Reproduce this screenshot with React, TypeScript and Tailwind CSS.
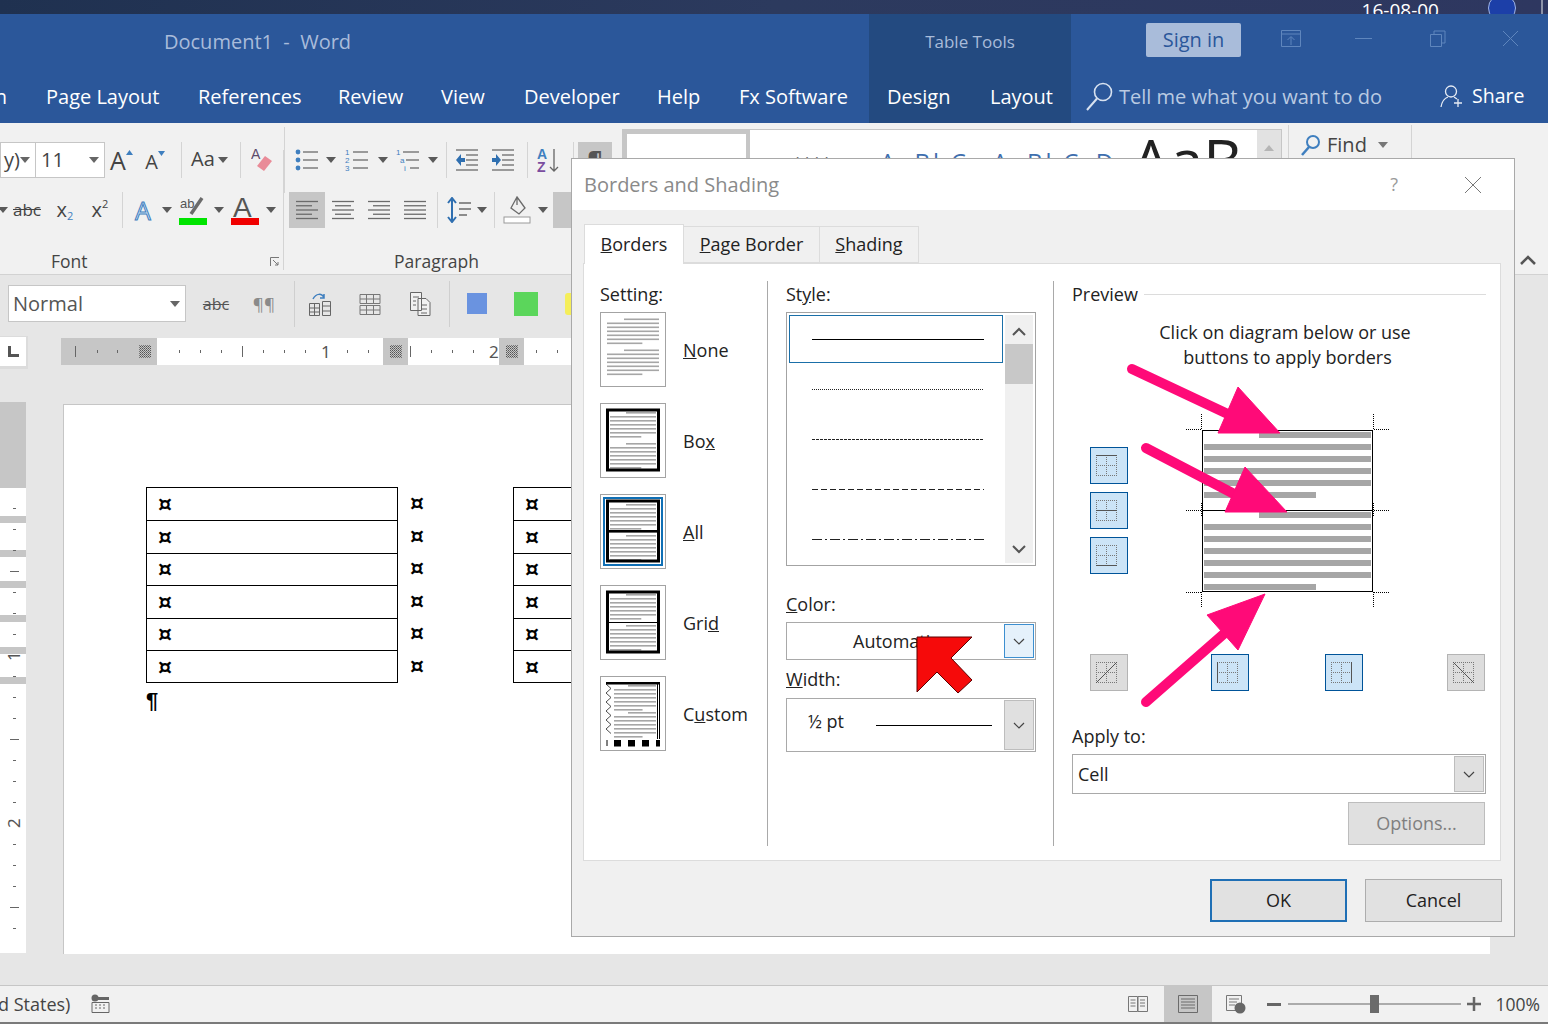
import React from "react";

const ui = "font-['Open_Sans','Noto_Sans',sans-serif]";

const Caret = ({ c = "#5a5a5a" }: { c?: string }) => (
  <svg width="10" height="6" viewBox="0 0 10 6" className="shrink-0"><path d="M0 0h10L5 6z" fill={c} /></svg>
);

const Sep = ({ w, h = 36 }: { w: number; h?: number }) => (
  <div className="flex justify-center items-center shrink-0 h-[36px]" style={{ width: w }}>
    <div className="w-px bg-[#d4d4d4] shrink-0" style={{ height: h }} />
  </div>
);

const Slot = ({ w, children, active }: { w: number; children?: React.ReactNode; active?: boolean }) => (
  <div className={`flex items-center justify-center shrink-0 h-[36px] ${active ? "bg-[#c6c6c6]" : ""}`} style={{ width: w }}>
    {children}
  </div>
);

const Lines = ({ rows, w = 24 }: { rows: [number, number][]; w?: number }) => (
  <svg width={w} height="22" viewBox={`0 0 ${w} 22`}>
    {rows.map(([a, b], i) => (
      <line key={i} x1={a} x2={b} y1={2.5 + i * (17 / (rows.length - 1))} y2={2.5 + i * (17 / (rows.length - 1))} stroke="#6b6b6b" strokeWidth="1.3" />
    ))}
  </svg>
);

const ListIcon = ({ kind }: { kind: "b" | "n" | "m" }) => (
  <svg width="24" height="24" viewBox="0 0 24 24">
    <g stroke="#6b6b6b" strokeWidth="1.3">
      <line x1={kind === "m" ? 7 : 8} x2="23" y1="4" y2="4" />
      <line x1={kind === "m" ? 10 : 8} x2="23" y1="12" y2="12" />
      <line x1={kind === "m" ? 14 : 8} x2={kind === "m" ? 23 : 23} y1="20" y2="20" />
    </g>
    {kind === "b" && [4, 12, 20].map((y) => <circle key={y} cx="3" cy={y} r="2.4" fill="#3f7fbf" />)}
    {kind !== "b" && (
      <g fontSize="8" fill="#3f7fbf" fontFamily="Liberation Sans">
        <text x="0" y="7">1</text>
        <text x={kind === "m" ? 4 : 0} y="15">{kind === "m" ? "a" : "2"}</text>
        <text x={kind === "m" ? 8 : 0} y="23">{kind === "m" ? "i" : "3"}</text>
      </g>
    )}
  </svg>
);

const IndentIcon = ({ flip }: { flip?: boolean }) => (
  <svg width="24" height="24" viewBox="0 0 24 24">
    <g stroke="#6b6b6b" strokeWidth="1.3">
      <line x1="1" x2="23" y1="2" y2="2" /><line x1="11" x2="23" y1="7" y2="7" /><line x1="11" x2="23" y1="12" y2="12" />
      <line x1="11" x2="23" y1="17" y2="17" /><line x1="1" x2="23" y1="22" y2="22" />
    </g>
    {flip ? <path d="M1 10h4V6l5 6-5 6v-4H1z" fill="#2f6fb0" /> : <path d="M10 10H6V6l-5 6 5 6v-4h4z" fill="#2f6fb0" />}
  </svg>
);

const SmallCell = ({ kind, blue = true }: { kind: "top" | "mid" | "bottom" | "left" | "right" | "up" | "down"; blue?: boolean }) => {
  const solid: Record<string, [number, number, number, number]> = {
    top: [5, 7.5, 26, 7.5], mid: [5, 17.5, 26, 17.5], bottom: [5, 27.5, 26, 27.5], left: [5.5, 7, 5.5, 28],
    right: [25.5, 7, 25.5, 28], up: [5, 28, 26, 7], down: [5, 7, 26, 28],
  };
  const [x1, y1, x2, y2] = solid[kind];
  return (
    <div className={`w-[38px] h-[37px] shrink-0 border ${blue ? "bg-[#cce4f7] border-[#005499]" : "bg-[#dddddd] border-[#b4b4b4]"}`}>
      <svg width="36" height="35" viewBox="0 0 36 35" className="block">
        <g stroke="#777" strokeDasharray="1 1" fill="none">
          {kind !== "top" && <line x1="5" x2="26" y1="7.5" y2="7.5" />}
          {kind !== "bottom" && <line x1="5" x2="26" y1="27.5" y2="27.5" />}
          {kind !== "left" && <line x1="5.5" x2="5.5" y1="7" y2="28" />}
          {kind !== "right" && <line x1="25.5" x2="25.5" y1="7" y2="28" />}
          <line x1="15.5" x2="15.5" y1="7" y2="28" />
          {kind !== "mid" && <line x1="5" x2="26" y1="17.5" y2="17.5" />}
        </g>
        <line x1={x1} x2={x2} y1={y1} y2={y2} stroke="#555" />
      </svg>
    </div>
  );
};

const TextRows = ({ top, left, right, start }: { top: number; left: number; right: number; start: number }) => (
  <g fill="#a6a6a6">
    {[0, 1, 2, 3, 4, 5, 6].map((i) => (
      <rect key={i} x={i === 0 ? start : left} y={top + i * 4} width={i === 0 ? right - start : i === 6 ? (right - left) * 0.68 : right - left} height="1.6" />
    ))}
  </g>
);

const Tile = ({ kind }: { kind: "none" | "box" | "all" | "grid" | "custom" }) => (
  <div className="w-[66px] h-[75px] border border-[#a3a3a3] bg-white shrink-0">
    <svg width="64" height="73" viewBox="1 1 64 73" className="block">
      {kind === "none" && (<><TextRows top={6.5} left={7} right={59} start={24} /><TextRows top={37.5} left={7} right={59} start={24} /></>)}
      {kind === "custom" && (
        <>
          <TextRows top={9} left={14} right={56} start={28} />
          <TextRows top={36} left={14} right={56} start={28} />
          <path d="M6 8l5 4.5-5 4.5 5 4.5-5 4.5 5 4.5-5 4.5 5 4.5-5 4.5 5 4.5-5 4.5 5 4.5" fill="none" stroke="#222" strokeWidth="0.8" />
          <rect x="6" y="6" width="54" height="2.5" fill="#000" />
          <path d="M57.5 7v56M59.5 7v56" stroke="#000" strokeWidth="1" />
          <path d="M7 64v6" stroke="#000" />
          <rect x="14" y="64" width="7" height="6.5" fill="#000" /><rect x="28" y="64" width="7" height="6.5" fill="#000" />
          <rect x="42" y="64" width="7" height="6.5" fill="#000" /><rect x="56" y="64" width="4" height="6.5" fill="#000" />
        </>
      )}
      {(kind === "box" || kind === "all" || kind === "grid") && (
        <>
          <TextRows top={kind === "all" ? 10 : 9} left={10} right={56} start={26} />
          <TextRows top={kind === "all" ? 41 : 40} left={10} right={56} start={26} />
          <rect x="7.5" y="7" width="51" height="60" fill="none" stroke="#000" strokeWidth="3" />
          {kind === "all" && <rect x="4" y="4" width="58" height="67" fill="none" stroke="#0f6fb5" strokeWidth="2" />}
          {kind === "all" && <rect x="7.5" y="36" width="51" height="2.6" fill="#000" />}
          {kind === "grid" && <rect x="7.5" y="37" width="51" height="1" fill="#000" />}
        </>
      )}
    </svg>
  </div>
);

const DropBtn = ({ className }: { className: string }) => (
  <div className={`w-[30px] flex items-center justify-center shrink-0 border ${className}`}>
    <svg width="12" height="7" viewBox="0 0 12 7"><path d="M1 1l5 5 5-5" fill="none" stroke="#444" strokeWidth="1.2" /></svg>
  </div>
);

const Diagram = () => {
  const bars = [435, 447, 459, 471, 483, 495, 515, 527, 539, 551, 563, 575, 587];
  return (
    <svg width="205" height="194" viewBox="1185 414 205 194" className="block shrink-0">
      {bars.map((y, i) => {
        const start = i === 0 || i === 6 ? 1259 : 1204;
        const end = i === 5 || i === 12 ? 1316 : 1371;
        return <rect key={y} x={start} y={y - 3} width={end - start} height="6" fill="#a6a6a6" />;
      })}
      <rect x="1202.5" y="430.5" width="170" height="161" fill="none" stroke="#000" />
      <line x1="1202" x2="1373" y1="510.5" y2="510.5" stroke="#000" />
      <g stroke="#000" strokeDasharray="1 1" fill="none">
        <path d="M1201.5 414v16M1373.5 414v16M1186 429.5h16M1374 429.5h16" />
        <path d="M1186 510.5h16M1374 510.5h16M1201.5 503v14M1373.5 503v14" />
        <path d="M1186 592.5h16M1374 592.5h16M1201.5 592v16M1373.5 592v16" />
      </g>
    </svg>
  );
};

const TopTabs = [
  { t: "n", w: 46, r: true }, { t: "Page Layout", w: 152 }, { t: "References", w: 140 }, { t: "Review", w: 103 },
  { t: "View", w: 83 }, { t: "Developer", w: 133 }, { t: "Help", w: 82 }, { t: "Fx Software", w: 130 },
];

const rulerTicks = [97, 117, 179, 200, 221, 263, 284, 305, 347, 368, 431, 452, 473, 536, 557];

const Ruler = () => (
  <svg width="510" height="27" viewBox="61 338 510 27" className="block shrink-0">
    <defs>
      <pattern id="rulerGrip" width="2" height="2" patternUnits="userSpaceOnUse">
        <rect width="2" height="2" fill="#c6c6c6" />
        <rect width="1" height="1" fill="#555" />
        <rect x="1" y="1" width="1" height="1" fill="#777" />
      </pattern>
    </defs>
    <rect x="61" y="338" width="510" height="27" fill="#fff" />
    <rect x="61" y="338" width="96" height="27" fill="#c6c6c6" />
    <rect x="383" y="338" width="25" height="27" fill="#c6c6c6" />
    <rect x="499" y="338" width="25" height="27" fill="#c6c6c6" />
    {rulerTicks.map((x) => <rect key={x} x={x} y="350" width="1" height="3" fill="#666" />)}
    {[75, 242, 410].map((x) => <rect key={x} x={x} y="346" width="1" height="11" fill="#666" />)}
    {[139, 390, 506].map((x) => (
      <rect key={x} x={x} y="345" width="12" height="13" fill="url(#rulerGrip)" />
    ))}
    <text x="321" y="358" fontSize="17" fill="#555" fontFamily="Noto Sans">1</text>
    <text x="489" y="358" fontSize="17" fill="#555" fontFamily="Noto Sans">2</text>
  </svg>
);

const VRuler = () => {
  const ticks = Array.from({ length: 21 }, (_, i) => 508 + i * 21);
  return (
    <svg width="26" height="551" viewBox="0 402 26 551" className="block shrink-0">
      <rect x="0" y="402" width="26" height="551" fill="#fff" />
      <rect x="0" y="402" width="26" height="86" fill="#c6c6c6" />
      {[516, 550, 581, 615, 647, 677].map((y) => <rect key={y} x="0" y={y} width="26" height="7" fill="#c6c6c6" />)}
      {ticks.map((y) => {
        if (y === 655 || y === 823) return null;
        const long = y === 571 || y === 739 || y === 907;
        return <rect key={y} x={long ? 10 : 13} y={y} width={long ? 9 : 3} height="1" fill="#666" />;
      })}
      <text transform="translate(20 661) rotate(-90)" fontSize="17" fill="#555" fontFamily="Noto Sans">1</text>
      <text transform="translate(20 828) rotate(-90)" fontSize="17" fill="#555" fontFamily="Noto Sans">2</text>
    </svg>
  );
};

const Mark = () => <span className="font-['DejaVu_Sans',sans-serif] font-bold text-[22px] leading-none text-black">¤</span>;

export default function App() {
  const cells = [0, 1, 2, 3, 4, 5];
  return (
    <div className={`relative w-[1548px] h-[1024px] overflow-hidden bg-[#e6e6e6] ${ui}`}>
      {/* desktop strip */}
      <div className="h-[14px] bg-gradient-to-r from-[#1f3150] via-[#2c3a5e] to-[#2e3760] overflow-hidden flex justify-end items-end pr-[5px]">
        <span className="text-white text-[19px] leading-none mb-[-6px] mr-[49px]">16-08-00</span>
        <div className="w-[28px] h-[28px] rounded-full bg-[#1c3fa8] border border-[#9fb4e6] mb-[8px] mr-[25px] translate-y-[16px]" />
        <div className="w-[2px] h-[14px] bg-[#8d93a8]" />
      </div>

      {/* title row */}
      <div className="h-[55px] bg-[#2b579a] flex">
        <div className="w-[869px] pl-[164px] flex items-center text-[#a9bcda] text-[20px]">
          <span>Document1&nbsp; -&nbsp; Word</span>
        </div>
        <div className="w-[202px] bg-[#234a80] flex items-center justify-center text-[#a9bcda] text-[17px]">Table Tools</div>
        <div className="flex-1 flex items-start pl-[75px] pt-[9px]">
          <div className="w-[95px] h-[34px] rounded-[2px] bg-[#a9bcda] text-[#2b579a] text-[20px] flex items-center justify-center">Sign in</div>
          <svg width="24" height="20" viewBox="0 0 24 20" className="ml-[38px] mt-[6px]">
            <path d="M2.5 1.5h19v16h-19zM2.5 5h19M12 16V8M8.5 11L12 7.5l3.5 3.5" fill="none" stroke="#5f86bd" />
          </svg>
          <svg width="18" height="20" viewBox="0 0 18 20" className="ml-[52px] mt-[6px]"><path d="M0 9.5h17" stroke="#5f86bd" /></svg>
          <svg width="16" height="18" viewBox="0 0 16 18" className="ml-[57px] mt-[7px]">
            <path d="M0.5 4.5h11v12h-11zM4 4V1h11v12h-3" fill="none" stroke="#5f86bd" />
          </svg>
          <svg width="17" height="17" viewBox="0 0 17 17" className="ml-[56px] mt-[7px]"><path d="M1 1l15 15M16 1L1 16" stroke="#5f86bd" /></svg>
        </div>
      </div>

      {/* tab row */}
      <div className="h-[54px] bg-[#2b579a] flex text-white text-[20px]">
        {TopTabs.map((tab) => (
          <div key={tab.t} className={`h-full flex items-center shrink-0 pt-[1px] ${tab.r ? "justify-end pr-[39px]" : ""}`} style={{ width: tab.w }}>
            {tab.t}
          </div>
        ))}
        <div className="w-[202px] bg-[#234a80] flex items-center pl-[18px] pt-[1px] shrink-0">
          <span className="w-[103px]">Design</span>
          <span>Layout</span>
        </div>
        <div className="flex items-center pl-[15px]">
          <svg width="27" height="29" viewBox="0 0 27 29"><circle cx="17" cy="10" r="8.5" fill="none" stroke="#d8e2f0" strokeWidth="1.6" /><path d="M11 16.5L1 28" stroke="#d8e2f0" strokeWidth="2" /></svg>
          <span className="ml-[6px] pt-[1px] text-[#b9cae2] w-[321px]">Tell me what you want to do</span>
          <svg width="24" height="24" viewBox="0 0 24 24">
            <circle cx="11" cy="7.5" r="5.5" fill="none" stroke="#e6ecf5" strokeWidth="1.3" />
            <path d="M1 23c1-6 4-9 7-10M14 13l3 2M18 15v8M14 19h8" fill="none" stroke="#e6ecf5" strokeWidth="1.3" />
          </svg>
          <span className="ml-[8px] text-white text-[19.5px]">Share</span>
        </div>
      </div>

      {/* ribbon */}
      <div className="h-[152px] bg-[#f1f1f1] border-b border-[#d2d2d2] flex text-[#444]">
        <div className="w-[620px] shrink-0 pt-[19px]">
          <div className="flex items-center h-[36px]">
            <div className="w-[36px] h-[36px] bg-white border border-[#c6c6c6] flex items-center justify-between pl-[3px] pr-[5px] text-[20px] shrink-0">
              <span>y)</span><Caret c="#666" />
            </div>
            <div className="w-[69px] h-[36px] bg-white border border-[#c6c6c6] border-l-0 flex items-center justify-between pl-[5px] pr-[5px] text-[20px] shrink-0">
              <span>11</span><Caret c="#666" />
            </div>
            <Slot w={33}><span className="text-[25px] leading-none">A</span><svg width="7" height="5" className="mb-[16px]"><path d="M0 5h7L3.5 0z" fill="#3f7fbf" /></svg></Slot>
            <Slot w={34}><span className="text-[20px] leading-none mt-[4px]">A</span><svg width="7" height="5" className="mb-[14px]"><path d="M0 0h7L3.5 5z" fill="#3f7fbf" /></svg></Slot>
            <Sep w={18} />
            <div className="w-[50px] h-[36px] flex items-center pl-[1px] shrink-0"><span className="text-[20px] mr-[3px] -mt-[3px]">Aa</span><Caret /></div>
            <div className="w-px h-[36px] bg-[#d4d4d4] shrink-0" />
            <Slot w={38}>
              <svg width="22" height="26" viewBox="0 0 22 26" className="ml-[3px]">
                <text x="0" y="12" fontSize="14" fill="#5b4a6b" fontFamily="Liberation Sans">A</text>
                <path d="M14 9l7 5-8 10-7-5z" fill="#e98b98" />
              </svg>
            </Slot>
            <Sep w={11} h={66} />
            <Slot w={34}><ListIcon kind="b" /></Slot><Slot w={14}><Caret /></Slot>
            <Slot w={38}><ListIcon kind="n" /></Slot><Slot w={14}><Caret /></Slot>
            <Slot w={36}><ListIcon kind="m" /></Slot><Slot w={14}><Caret /></Slot>
            <Sep w={12} />
            <Slot w={30}><IndentIcon /></Slot>
            <Slot w={42}><IndentIcon flip /></Slot>
            <Sep w={6} />
            <Slot w={38}>
              <svg width="24" height="28" viewBox="0 0 24 28">
                <text x="0" y="13" fontSize="14" fontWeight="700" fill="#3f7fbf" fontFamily="Liberation Sans">A</text>
                <text x="0" y="26" fontSize="14" fontWeight="700" fill="#7a4d9f" fontFamily="Liberation Sans">Z</text>
                <path d="M17 3v22M13 21l4 4 4-4" fill="none" stroke="#666" strokeWidth="1.3" />
              </svg>
            </Slot>
            <Sep w={10} />
            <Slot w={34} active><span className="text-[24px] text-[#555] font-bold leading-none">¶</span></Slot>
          </div>
          <div className="flex items-center h-[36px] mt-[14px]">
            <Slot w={6}><Caret /></Slot>
            <Slot w={42}><span className="text-[17px] line-through">abc</span></Slot>
            <Slot w={34}><span className="text-[20px] font-medium">x</span><span className="text-[11px] text-[#3f7fbf] mt-[12px]">2</span></Slot>
            <Slot w={36}><span className="text-[20px] font-medium">x</span><span className="text-[11px] mb-[12px]">2</span></Slot>
            <Sep w={8} />
            <Slot w={34}>
              <span className="text-[25px] leading-none text-[#d6e6f7] [-webkit-text-stroke:1px_#3f7fbf]">A</span>
            </Slot>
            <Slot w={14}><Caret /></Slot>
            <Slot w={38}>
              <svg width="30" height="30" viewBox="0 0 30 30">
                <text x="2" y="13" fontSize="13" fill="#555" fontFamily="Liberation Sans">ab</text>
                <path d="M24 3L13 19" stroke="#6b6b6b" strokeWidth="3.5" />
                <rect x="1" y="23" width="28" height="7" fill="#00e400" />
              </svg>
            </Slot>
            <Slot w={14}><Caret /></Slot>
            <Slot w={38}>
              <svg width="30" height="30" viewBox="0 0 30 30">
                <text x="3" y="22" fontSize="28" fill="#555" fontFamily="Liberation Sans">A</text>
                <rect x="1" y="23" width="28" height="7" fill="#f00000" />
              </svg>
            </Slot>
            <Slot w={14}><Caret /></Slot>
            <Sep w={11} h={120} />
            <Slot w={36} active><Lines w={24} rows={[[1, 23], [1, 17], [1, 23], [1, 17], [1, 23]]} /></Slot>
            <Slot w={36}><Lines rows={[[1, 23], [4, 20], [1, 23], [4, 20], [1, 23]]} /></Slot>
            <Slot w={36}><Lines rows={[[1, 23], [6, 23], [1, 23], [6, 23], [1, 23]]} /></Slot>
            <Slot w={36}><Lines rows={[[1, 23], [1, 23], [1, 23], [1, 23], [1, 23]]} /></Slot>
            <Sep w={8} />
            <Slot w={36}>
              <svg width="24" height="26" viewBox="0 0 24 26">
                <path d="M5 1v24M1 6l4-5 4 5M1 20l4 5 4-5" fill="none" stroke="#2f6fb0" strokeWidth="2" />
                <path d="M12 6h12M12 12h12M12 18h8" stroke="#6b6b6b" strokeWidth="1.3" />
              </svg>
            </Slot>
            <Slot w={10}><Caret /></Slot>
            <Sep w={14} />
            <Slot w={32}>
              <svg width="28" height="28" viewBox="0 0 28 28">
                <path d="M14 1l8 11-6 6-8-6zM14 1v8" fill="none" stroke="#6b6b6b" strokeWidth="1.3" />
                <rect x="1" y="21" width="26" height="6" fill="#fff" stroke="#9a9a9a" />
              </svg>
            </Slot>
            <Slot w={20}><Caret /></Slot>
            <Slot w={38} active />
          </div>
          <div className="flex h-[22px] mt-[22px] text-[17.5px] leading-[22px] text-[#444]">
            <span className="ml-[51px] w-[219px]">Font</span>
            <svg width="10" height="10" viewBox="0 0 10 10" className="mt-[7px]"><path d="M0.5 9V0.5H9M3 3l5 5M8 5v3H5" fill="none" stroke="#777" /></svg>
            <span className="ml-[114px]">Paragraph</span>
          </div>
        </div>
        <div className="w-[2px] shrink-0" />
        <div className="h-[135px] w-[660px] mt-[6px] bg-white border border-[#c6c6c6] flex shrink-0 overflow-hidden">
          <div className="w-[127px] h-full border-[4px] border-[#c6c6c6] shrink-0" />
          <div className="w-[130px] pt-[17px] text-center text-[14px] text-[#444] leading-none tracking-[6px] shrink-0">....</div>
          <div className="w-[252px] pt-[20px] text-[#3f6fae] text-[24px] leading-none tracking-[3px] shrink-0 whitespace-nowrap overflow-hidden">AaBbCc AaBbCcD</div>
          <div className="w-[116px] text-[60px] leading-none text-[#222] shrink-0">AaB</div>
          <div className="w-[24px] bg-[#e2e2e2] flex justify-center pt-[15px] shrink-0 ml-auto">
            <svg width="10" height="6"><path d="M0 6h10L5 0z" fill="#b5b5b5" /></svg>
          </div>
        </div>
        <div className="flex-1 pl-[6px] pt-[2px]">
          <div className="flex items-center h-[40px] w-[124px] border-x border-[#d4d4d4] pl-[11px]">
            <svg width="20" height="22" viewBox="0 0 20 22"><circle cx="13" cy="8" r="6" fill="none" stroke="#3f7fbf" strokeWidth="2" /><path d="M9 13L2 21" stroke="#3f7fbf" strokeWidth="2.5" /></svg>
            <span className="ml-[7px] text-[20px] text-[#444]">Find</span>
            <span className="ml-[11px]"><Caret c="#777" /></span>
          </div>
        </div>
      </div>

      {/* mini toolbar */}
      <div className="h-[62px] flex items-center pb-[5px] text-[#555]">
        <div className="ml-[8px] w-[178px] h-[37px] bg-white border border-[#c6c6c6] flex items-center justify-between pl-[4px] pr-[5px] text-[20px] shrink-0">
          <span>Normal</span><Caret c="#666" />
        </div>
        <span className="w-[60px] text-center text-[16px] line-through shrink-0">abc</span>
        <span className="w-[36px] text-center text-[17px] text-[#8a8a8a] shrink-0">¶¶</span>
        <div className="w-[13px] flex justify-end shrink-0"><div className="w-px h-[46px] bg-[#cfcfcf]" /></div>
        <div className="w-[50px] flex justify-center shrink-0">
          <svg width="24" height="26" viewBox="0 0 24 26">
            <path d="M5 8c3-6 9-6 11-1M16 3v4h-4" fill="none" stroke="#3f7fbf" strokeWidth="1.5" />
            <path d="M1.5 12.5h10v12h-10zM1.5 17h10M1.5 21h10M6.5 13v11M14.5 10.5h8v14h-8zM14.5 15h8M14.5 20h8" fill="none" stroke="#666" />
          </svg>
        </div>
        <div className="w-[50px] flex justify-center shrink-0">
          <svg width="22" height="26" viewBox="0 0 22 26"><path d="M1 3.5h20v9H1zM1 8h20M1 14.5h20v9H1zM1 19h20M7.5 3v9M14.5 3v9M7.5 15v9M14.5 15v9" fill="none" stroke="#777" /></svg>
        </div>
        <div className="w-[50px] flex justify-center shrink-0">
          <svg width="22" height="26" viewBox="0 0 22 26"><path d="M1.5 1.5h11v18h-11zM9 7.5h8l4 4v13H9zM4 6h6M4 10h3M4 14h3M12 14h6M12 18h6M12 22h6" fill="#f1f1f1" stroke="#666" /></svg>
        </div>
        <div className="w-[5px] flex justify-end shrink-0 mr-[17px]"><div className="w-px h-[46px] bg-[#cfcfcf]" /></div>
        <div className="w-[20px] h-[21px] bg-[#6a93e0] shrink-0" />
        <div className="w-[24px] h-[24px] bg-[#5bd65b] shrink-0 ml-[27px]" />
        <div className="w-[20px] h-[22px] bg-[#f5ee5a] shrink-0 ml-[27px] rounded-[3px]" />
      </div>

      {/* ruler */}
      <div className="flex h-[28px] items-start">
        <div className="w-[28px] h-[33px] -mt-[1px] bg-[#dcdcdc] pr-[2px] pb-[3px] pt-[1px] shrink-0 z-10">
          <div className="h-full bg-white flex items-center justify-center">
            <svg width="11" height="11" viewBox="0 0 11 11"><path d="M1.5 0v9.5H11" fill="none" stroke="#555" strokeWidth="3" /></svg>
          </div>
        </div>
        <div className="w-[33px] shrink-0" />
        <div className="mt-[1px]"><Ruler /></div>
      </div>

      {/* document */}
      <div className="h-[620px] flex items-start">
        <div className="mt-[37px] shrink-0"><VRuler /></div>
        <div className="ml-[37px] mt-[39px] w-[1427px] h-[550px] bg-white border-l border-t border-[#c6c6c6] shrink-0 pl-[82px] pt-[82px]">
          <div className="flex items-start">
            <div className="w-[252px] border-[1.5px] border-black shrink-0">
              {cells.map((i) => (
                <div key={i} className={`h-[32.4px] pl-[11px] flex items-center ${i ? "border-t border-black" : ""}`}><Mark /></div>
              ))}
            </div>
            <div className="ml-[12px] w-[103px] shrink-0">
              {cells.map((i) => <div key={i} className="h-[32.5px] flex items-center"><Mark /></div>)}
            </div>
            <div className="w-[120px] border-[1.5px] border-black shrink-0">
              {cells.map((i) => (
                <div key={i} className={`h-[32.4px] pl-[11px] flex items-center ${i ? "border-t border-black" : ""}`}><Mark /></div>
              ))}
            </div>
          </div>
          <div className="font-['Liberation_Sans',sans-serif] font-bold text-[22px] leading-none text-black mt-[7px]">¶</div>
        </div>
      </div>

      {/* status bar */}
      <div className="h-[37px] bg-[#f1f1f1] border-t border-[#c6c6c6] flex items-center pr-[8px] text-[#444]">
        <span className="w-[92px] text-[18px] shrink-0 whitespace-nowrap -ml-[2px]">d States)</span>
        <svg width="20" height="20" viewBox="0 0 20 20" className="shrink-0">
          <circle cx="5" cy="4" r="3.5" fill="#666" /><path d="M8 3h11v3H8z" fill="#666" />
          <path d="M2 8.5h17v10H2zM5 11h2M9 11h2M13 11h2M5 14h2M9 14h2M13 14h2" fill="none" stroke="#666" />
        </svg>
        <div className="flex-1" />
        <svg width="20" height="18" viewBox="0 0 20 18" className="shrink-0">
          <path d="M0.5 1.5h9v15h-9zM10 1.5h9.5v15H10zM2.5 5h5M2.5 8h5M2.5 11h5M12 5h5M12 8h5M12 11h5" fill="none" stroke="#777" />
        </svg>
        <div className="w-[48px] h-full bg-[#c6c6c6] ml-[16px] flex items-center justify-center shrink-0">
          <svg width="20" height="18" viewBox="0 0 20 18"><path d="M0.5 0.5h19v17H0.5zM3 4h14M3 7h14M3 10h14M3 13h14" fill="none" stroke="#6b6b6b" /></svg>
        </div>
        <svg width="20" height="20" viewBox="0 0 20 20" className="ml-[14px] shrink-0">
          <path d="M0.5 1.5h15v15H0.5zM3 5h10M3 8h8M3 11h6" fill="none" stroke="#777" />
          <circle cx="14" cy="14" r="5.5" fill="#666" />
        </svg>
        <div className="w-[14px] h-[3px] bg-[#666] ml-[21px] shrink-0" />
        <div className="relative w-[173px] h-[2px] bg-[#ababab] ml-[7px] shrink-0">
          <div className="absolute left-[82px] -top-[8px] w-[9px] h-[18px] bg-[#6b6b6b]" />
        </div>
        <svg width="14" height="14" viewBox="0 0 14 14" className="ml-[6px] shrink-0"><path d="M0 7h14M7 0v14" stroke="#666" strokeWidth="2.5" /></svg>
        <span className="ml-[15px] text-[17.5px] shrink-0">100%</span>
      </div>
      <div className="h-[2px] bg-[#7a7a7a]" />

      {/* collapse chevron */}
      <svg width="18" height="12" viewBox="0 0 18 12" className="absolute left-[1519px] top-[254px]"><path d="M2 10l7-7 7 7" fill="none" stroke="#555" strokeWidth="2.5" /></svg>

      {/* dialog */}
      <div className="absolute left-[571px] top-[158px] w-[944px] h-[779px] bg-[#f0f0f0] border border-[#a9a9a9] text-[18px] text-[#222] z-20">
        <div className="h-[51px] bg-white flex items-center pl-[12px]">
          <span className="text-[20px] text-[#8a8a8a]">Borders and Shading</span>
          <span className="ml-auto text-[#9a9a9a] text-[18px]">?</span>
          <svg width="18" height="18" viewBox="0 0 18 18" className="ml-[66px] mr-[32px]"><path d="M1 1l16 16M17 1L1 17" stroke="#777" /></svg>
        </div>
        <div className="h-[53px] pl-[12px] flex items-end">
          <div className="w-[100px] h-[40px] bg-white border border-[#dcdcdc] border-b-0 flex items-center justify-center relative top-[1px] z-10"><span><u>B</u>orders</span></div>
          <div className="w-[136px] h-[37px] border border-[#dcdcdc] border-l-0 flex items-center justify-center"><span><u>P</u>age Border</span></div>
          <div className="w-[99px] h-[37px] border border-[#dcdcdc] border-l-0 flex items-center justify-center"><span><u>S</u>hading</span></div>
        </div>
        <div className="ml-[11px] w-[918px] h-[598px] bg-white border border-[#dcdcdc] flex items-start">
          {/* setting column */}
          <div className="w-[184px] h-[565px] mt-[17px] border-r border-[#a9a9a9] pl-[16px] pt-[2px] shrink-0">
            <div className="h-[22px] leading-[22px]">Setting:</div>
            <div className="flex flex-col gap-[16px] mt-[7px]">
              {([["none", <><u>N</u>one</>], ["box", <>Bo<u>x</u></>], ["all", <><u>A</u>ll</>], ["grid", <>Gri<u>d</u></>], ["custom", <>C<u>u</u>stom</>]] as const).map(([k, label]) => (
                <div key={k} className="flex items-center h-[75px]">
                  <Tile kind={k} />
                  <span className="ml-[17px] pt-[2px]">{label}</span>
                </div>
              ))}
            </div>
          </div>
          {/* style column */}
          <div className="w-[286px] h-[565px] mt-[17px] border-r border-[#a9a9a9] pl-[18px] pt-[2px] shrink-0">
            <div className="h-[22px] leading-[22px]">St<u>y</u>le:</div>
            <div className="w-[250px] h-[254px] mt-[7px] border border-[#a3a3a3] flex p-[2px] pr-[2px] bg-white">
              <div className="w-[214px] shrink-0">
                <div className="h-[48px] border border-[#1a6fa8] flex items-center pl-[22px]">
                  <svg width="172" height="1" className="block"><line x2="172" y1="0.5" y2="0.5" stroke="#000" /></svg>
                </div>
                {["1 1", "3 1", "6 3", "10 3 2 3"].map((d) => (
                  <div key={d} className="h-[50px] flex items-center pl-[23px] pt-[2px]">
                    <svg width="172" height="1" className="block"><line x2="172" y1="0.5" y2="0.5" stroke="#222" strokeDasharray={d} /></svg>
                  </div>
                ))}
              </div>
              <div className="w-[28px] ml-[2px] bg-[#f0f0f0] flex flex-col items-center shrink-0 pt-[12px]">
                <svg width="14" height="9" viewBox="0 0 14 9"><path d="M1 8l6-6 6 6" fill="none" stroke="#555" strokeWidth="2" /></svg>
                <div className="w-full h-[40px] bg-[#c8c8c8] mt-[8px]" />
                <div className="flex-1" />
                <svg width="14" height="9" viewBox="0 0 14 9" className="mb-[9px]"><path d="M1 1l6 6 6-6" fill="none" stroke="#555" strokeWidth="2" /></svg>
              </div>
            </div>
            <div className="h-[22px] leading-[22px] mt-[27px]"><u>C</u>olor:</div>
            <div className="w-[250px] h-[38px] mt-[7px] border border-[#a9a9a9] flex items-center p-[1px]">
              <span className="flex-1 pl-[65px] whitespace-nowrap">Automatic</span>
              <DropBtn className="h-[34px] bg-[#e5f1fb] border-[#3c8fd0]" />
            </div>
            <div className="h-[22px] leading-[22px] mt-[8px]"><u>W</u>idth:</div>
            <div className="w-[250px] h-[54px] mt-[8px] border border-[#a9a9a9] flex items-center p-[1px]">
              <span className="w-[88px] pl-[20px] shrink-0 -mt-[7px]">½ pt</span>
              <svg width="116" height="1" className="shrink-0 block"><line x2="116" y1="0.5" y2="0.5" stroke="#000" /></svg>
              <div className="flex-1" />
              <DropBtn className="h-[50px] bg-[#e0e0e0] border-[#bdbdbd]" />
            </div>
          </div>
          {/* preview column */}
          <div className="w-[414px] ml-[18px] pt-[19px] shrink-0">
            <div className="flex items-center h-[22px]">
              <span>Preview</span>
              <div className="flex-1 h-px bg-[#dcdcdc] ml-[6px]" />
            </div>
            <div className="mt-[15px] pl-[12px] text-center leading-[25px]">
              Click on diagram below or use<br /><span className="pl-[5px]">buttons to apply borders</span>
            </div>
            <div className="flex mt-[44px]">
              <div className="ml-[18px] pt-[33px] flex flex-col gap-[8px] shrink-0">
                <SmallCell kind="top" /><SmallCell kind="mid" /><SmallCell kind="bottom" />
              </div>
              <div className="ml-[57px]"><Diagram /></div>
            </div>
            <div className="flex mt-[46px] pl-[18px]">
              <SmallCell kind="up" blue={false} />
              <div className="ml-[83px]"><SmallCell kind="left" /></div>
              <div className="ml-[76px]"><SmallCell kind="right" /></div>
              <div className="ml-[84px]"><SmallCell kind="down" blue={false} /></div>
            </div>
            <div className="h-[22px] leading-[22px] mt-[34px]">Apply to:</div>
            <div className="h-[40px] mt-[7px] border border-[#a9a9a9] flex items-center p-[1px] pl-[5px]">
              <span className="flex-1">Cell</span>
              <DropBtn className="h-[36px] bg-[#e0e0e0] border-[#bdbdbd]" />
            </div>
            <div className="flex justify-end mt-[8px] pr-[1px]">
              <div className="w-[137px] h-[43px] bg-[#e0e0e0] border border-[#bdbdbd] text-[#7f7f7f] flex items-center justify-center">Options...</div>
            </div>
          </div>
        </div>
        <div className="flex justify-end gap-[18px] mt-[18px] pr-[12px]">
          <div className="w-[137px] h-[43px] bg-[#e1e1e1] border-2 border-[#1f6fb5] flex items-center justify-center">OK</div>
          <div className="w-[137px] h-[43px] bg-[#e1e1e1] border border-[#adadad] flex items-center justify-center">Cancel</div>
        </div>
      </div>

      {/* annotation arrows */}
      <svg width="1548" height="1024" viewBox="0 0 1548 1024" className="absolute left-0 top-0 z-30 pointer-events-none">
        <g fill="#ff0a78" stroke="#ff0a78">
          <path d="M1132 369L1232 416" strokeWidth="10" strokeLinecap="round" />
          <path d="M1238 387L1280 433L1218 433z" strokeWidth="1" />
          <path d="M1146 448L1238 496" strokeWidth="10" strokeLinecap="round" />
          <path d="M1245 467L1287 512L1225 512z" strokeWidth="1" />
          <path d="M1146 702L1226 632" strokeWidth="10" strokeLinecap="round" />
          <path d="M1265 594L1207 615L1238 650z" strokeWidth="1" />
        </g>
        <path d="M917 637L972 637L951 658L972 680L958 693L937 672L917 692z" fill="#f60a0a" stroke="#5c0000" strokeWidth="1" />
      </svg>
    </div>
  );
}
